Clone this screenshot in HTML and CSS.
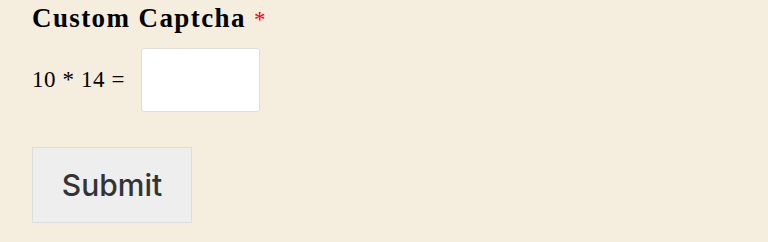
FILE: index.html
```
<!DOCTYPE html>
<html lang="en">

<head>
    <meta charset="utf-8">
    <meta name="viewport" content="width=device-width, initial-scale=1.0">
    <title>Custom Captcha</title>
    <link rel="stylesheet" href="styles.css">
</head>

<body>
    <form class="captcha-form">
        <label class="captcha-label" for="captcha">Custom Captcha <span class="required">*</span></label>
        <div class="captcha-row">
            <span class="captcha-question">10 * 14 =</span>
            <input type="text" id="captcha" class="captcha-input">
        </div>
        <button type="button" class="submit">Submit</button>
    </form>
</body>

</html>
```

FILE: styles.css
```
body {
    margin: 0;
    padding: 0;
    background-color: #f5eedf;
    font-family: "Liberation Serif", "DejaVu Serif", serif;
    color: #000;
}

.captcha-form {
    padding: 2px 32px 0;
}

.captcha-label {
    display: block;
    font-size: 27px;
    font-weight: 700;
    letter-spacing: 1.4px;
    line-height: 32px;
}

.required {
    color: #f00;
    font-size: 23px;
    font-weight: 400;
    letter-spacing: 0;
}

.captcha-row {
    display: flex;
    align-items: center;
    gap: 16px;
    margin-top: 12px;
}

.captcha-question {
    font-size: 23px;
    letter-spacing: 0.6px;
}

.captcha-input {
    width: 119px;
    height: 64px;
    box-sizing: border-box;
    border: 1px solid #ddd;
    border-radius: 3px;
    background-color: #fff;
    margin: 0;
}

.submit {
    display: block;
    margin-top: 35px;
    width: 160px;
    height: 76px;
    background-color: #eeeeee;
    border: 1px solid #dddddd;
    color: #333;
    font-family: "Inter", "Liberation Sans", sans-serif;
    font-size: 30px;
    font-weight: 500;
    cursor: pointer;
}
```
